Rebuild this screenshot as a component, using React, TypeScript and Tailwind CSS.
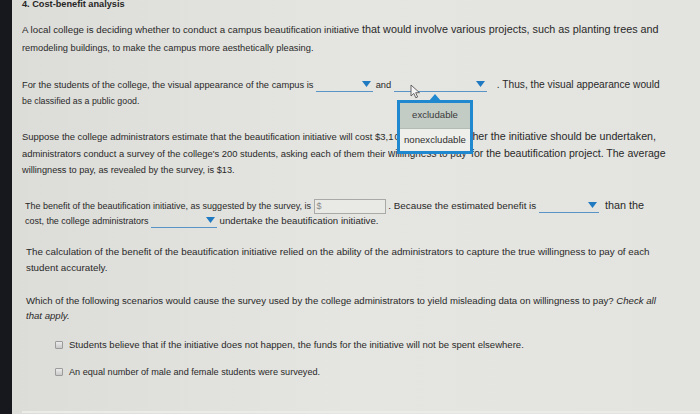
import React from 'react';

function Dropdown({ w }: { w: string }) {
  return (
    <span className={`relative inline-block h-[12px] border-b-[1.5px] border-[#5a94c6] align-[-4px] ${w}`}>
      <svg className="absolute right-[2px] top-[1px]" width="9" height="6" viewBox="0 0 9 6">
        <path d="M0 0 H9 L4.5 6 Z" fill="#1f7ac2" />
      </svg>
    </span>
  );
}

function Checkbox() {
  return (
    <span className="inline-block w-[8px] h-[8px] rounded-[1px] border border-[#9b9b9b] bg-gradient-to-b from-[#ececec] to-[#c9c9c9] shrink-0" />
  );
}

export default function App() {
  return (
    <div className="w-[700px] h-[414px] overflow-hidden flex bg-[#16171d] font-['Liberation_Sans',Arial,sans-serif] text-[#292929]">
      <div className="w-[12px] shrink-0 bg-[#17181e]" />
      <div className="relative flex-1 flex flex-col bg-gradient-to-r from-[#dcdcd8] via-[#e5e5e1] to-[#e3e3df] pl-[10px] pb-[1px]">
        <div className="mt-[-1px] leading-[10px] text-[9.2px] font-bold text-[#262626]">4. Cost-benefit analysis</div>

        <div className="mt-[11px] text-[9.7px] leading-[19px] whitespace-nowrap">
          <div>
            <span className="leading-none">A local college is deciding whether to conduct a campus beautification initiative</span>
            <span className="text-[10.8px] leading-none"> that would involve various projects, such as planting trees and</span>
          </div>
          <div className="text-[9.3px]">remodeling buildings, to make the campus more aesthetically pleasing.</div>
        </div>

        <div className="mt-[19px] text-[9.3px] leading-[16px] whitespace-nowrap">
          <div>
            For the students of the college, the visual appearance of the campus is <Dropdown w="w-[57px]" /> and{' '}
            <Dropdown w="w-[93px]" />
            <span className="ml-[10px] text-[10.2px] leading-none">. Thus, the visual appearance would</span>
          </div>
          <div className="text-[8.8px]">be classified as a public good.</div>
        </div>

        <div className="mt-[19px] text-[9.45px] leading-[17px] whitespace-nowrap">
          <div>
            <span className="leading-none">Suppose the college administrators estimate that the beautification initiative will cost $3,1</span>
            <span className="inline-block w-[76px] overflow-hidden align-top pl-[1px]">00. To determine whe</span>
            <span className="text-[10.7px] leading-none">ther the initiative should be undertaken,</span>
          </div>
          <div>
            <span className="text-[9.4px] leading-none">administrators conduct a survey of the college's 200 students, asking each of them their </span>
            <span className="inline-block w-[83px] overflow-hidden align-top text-[10px]">willingness to pay</span>
            <span className="text-[10.55px] leading-none">for the beautification project. The average</span>
          </div>
          <div className="text-[9.2px]">willingness to pay, as revealed by the survey, is $13.</div>
        </div>

        <div className="mt-[20px] pl-[3px] text-[9px] leading-[15px] whitespace-nowrap">
          <div>
            <span>The benefit of the beautification initiative, as suggested by the survey, is </span>
            <span className="inline-block w-[72px] h-[15px] border border-[#a9a9a7] bg-[#e9e9e6] pl-[2px] leading-[13px] text-[#8a8a8a]">$</span>
            <span className="text-[9.87px] leading-none"> . Because the estimated benefit is </span>
            <Dropdown w="w-[60px]" />
            <span className="ml-[6px] text-[10.8px] leading-none">than the</span>
          </div>
          <div>
            <span className="text-[8.96px] leading-none">cost, the college administrators </span>
            <Dropdown w="w-[66px]" />
            <span className="text-[9.67px] leading-none"> undertake the beautification initiative.</span>
          </div>
        </div>

        <div className="mt-[15px] pl-[4px] text-[9.8px] leading-[16px] whitespace-nowrap">
          <div>The calculation of the benefit of the beautification initiative relied on the ability of the administrators to capture the true willingness to pay of each</div>
          <div>student accurately.</div>
        </div>

        <div className="mt-[17px] pl-[4px] text-[9.6px] leading-[15px] whitespace-nowrap">
          <div>
            Which of the following scenarios would cause the survey used by the college administrators to yield misleading data on willingness to pay?{' '}
            <em>Check all</em>
          </div>
          <div>
            <em>that apply.</em>
          </div>
        </div>

        <div className="mt-[14px] pl-[33px] flex flex-col gap-[11px] leading-[16px] whitespace-nowrap">
          <div className="flex items-center gap-[6px]">
            <Checkbox />
            <span className="text-[9.55px]">Students believe that if the initiative does not happen, the funds for the initiative will not be spent elsewhere.</span>
          </div>
          <div className="flex items-center gap-[6px]">
            <Checkbox />
            <span className="text-[9.15px]">An equal number of male and female students were surveyed.</span>
          </div>
        </div>

        <div className="mt-auto h-[2px] bg-[#ebebe8]" />

        {/* open dropdown menu */}
        <div className="absolute left-[385px] top-[100px] w-[76px] h-[54px] border-[3px] border-[#2088cf] bg-[#eeeeeb] text-[9.6px] flex flex-col">
          <svg className="absolute left-[29px] top-[-9px]" width="12" height="7" viewBox="0 0 12 7">
            <path d="M0 7 L6 0 L12 7 Z" fill="#2088cf" />
          </svg>
          <div className="h-[26px] shrink-0 bg-[#c3cbc5] border-b border-[#b3bbb5] flex items-center justify-center text-[#3a3a3a]">excludable</div>
          <div className="flex-1 flex items-center pl-[4px] text-[#2e2e2e]">nonexcludable</div>
        </div>

        {/* mouse pointer */}
        <svg className="absolute left-[398px] top-[84px]" width="11" height="15" viewBox="0 0 11 15">
          <path d="M1 1 L1 12 L3.8 9.4 L5.8 13.8 L7.6 13 L5.7 8.7 L9.5 8.7 Z" fill="#f4f4f4" stroke="#555" strokeWidth="0.9" strokeLinejoin="round" />
        </svg>
      </div>
    </div>
  );
}
